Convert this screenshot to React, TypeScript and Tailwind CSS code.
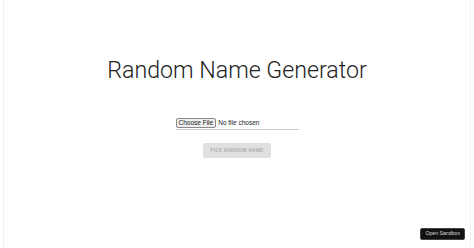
export default function App() {
    return (
        <div className="h-[248px] w-[474px] bg-white font-['Roboto',sans-serif] overflow-hidden relative">
            <div className="mx-[3px] h-full border-x border-[#f2f2f2] flex flex-col items-center">
                {/* Title */}
                <h1 className="mt-[55px] text-[23.2px] leading-[30px] font-light text-[#222]">
                    Random Name Generator
                </h1>

                {/* File input */}
                <div className="mt-[33px] w-[123px] border-b border-[#c8c8c8] flex items-center pb-[1px] font-['Liberation_Sans',sans-serif] text-[6.5px] text-[#222]">
                    <span className="px-[2px] h-[10px] leading-[8px] border border-[#8a8a8a] rounded-[2px] bg-[#efefef]">
                        Choose File
                    </span>
                    <span className="ml-[2px]">No file chosen</span>
                </div>

                {/* Disabled button */}
                <button
                    disabled
                    className="mt-[13px] w-[68px] h-[15px] rounded-[2px] bg-[#e0e0e0] text-[5px] font-medium tracking-[0.3px] text-[#aaa] uppercase"
                >
                    Pick random name
                </button>
            </div>

            <button className="absolute right-[9px] bottom-[8px] h-[12px] px-[4px] rounded-[2px] bg-[#111] border border-[#444] text-[5.2px] text-[#ddd] font-['Liberation_Sans',sans-serif]">
                Open Sandbox
            </button>
        </div>
    );
}
